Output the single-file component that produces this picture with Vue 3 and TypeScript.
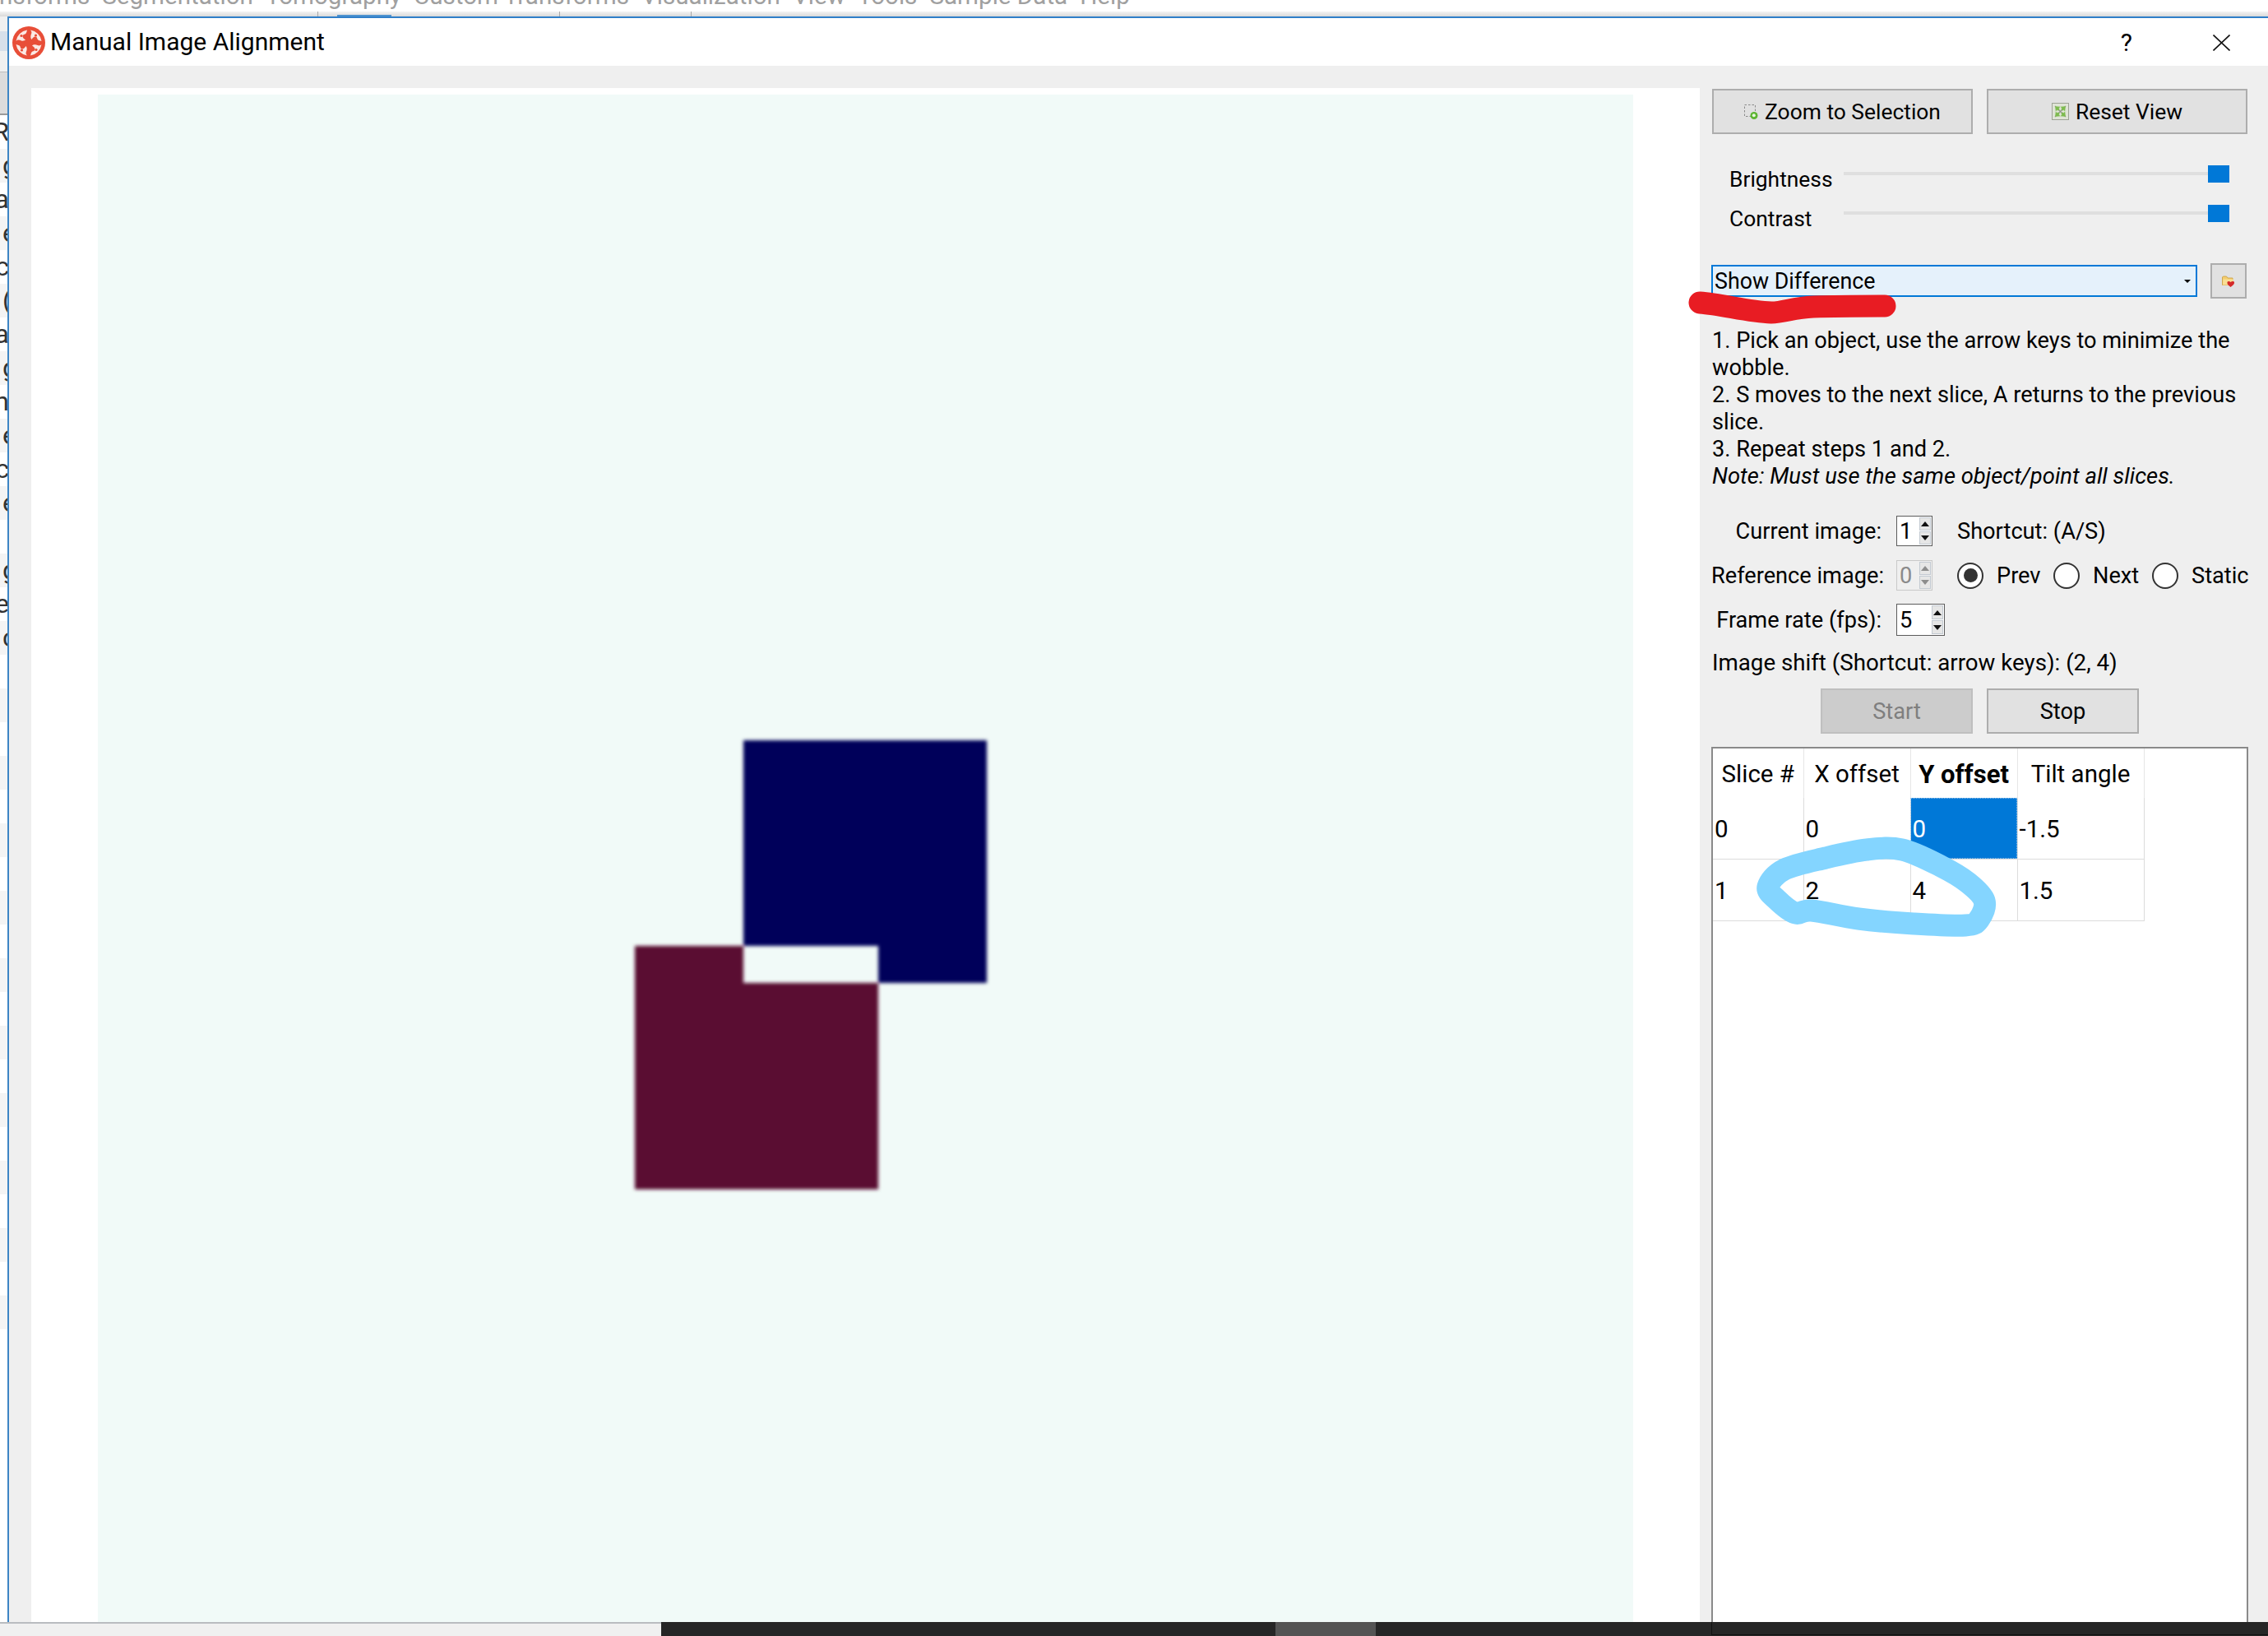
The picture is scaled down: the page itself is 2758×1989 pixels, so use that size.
<script setup lang="ts">
type Pt = [number, number]

function smoothClosed(pts: Pt[]): string {
  const n = pts.length
  let d = `M${pts[0][0]} ${pts[0][1]}`
  for (let i = 0; i < n; i++) {
    const p0 = pts[(i - 1 + n) % n]
    const p1 = pts[i]
    const p2 = pts[(i + 1) % n]
    const p3 = pts[(i + 2) % n]
    const c1x = p1[0] + (p2[0] - p0[0]) / 6
    const c1y = p1[1] + (p2[1] - p0[1]) / 6
    const c2x = p2[0] - (p3[0] - p1[0]) / 6
    const c2y = p2[1] - (p3[1] - p1[1]) / 6
    d += ` C${c1x.toFixed(1)} ${c1y.toFixed(1)} ${c2x.toFixed(1)} ${c2y.toFixed(1)} ${p2[0]} ${p2[1]}`
  }
  return d + 'Z'
}

const blueLoop = smoothClosed([
  [2150, 1078], [2170, 1057], [2220, 1043], [2270, 1033], [2313, 1033], [2360, 1053],
  [2393, 1073], [2413, 1095], [2407, 1117], [2390, 1125], [2327, 1123], [2260, 1117],
  [2203, 1107], [2183, 1110], [2160, 1093]
])

const menu = ['Transforms', 'Segmentation', 'Tomography', 'Custom Transforms', 'Visualization', 'View', 'Tools', 'Sample Data', 'Help']
const backRows = ['R', 'g', 'a', 'e', 'c', '(', 'a', 'g', 'n', 'e', 'c', 'e', '', 'g', 'e', 'c', '', '', '', '', '', '', '', '', '', '', '', '', '', '', '', '', '', '', '', '']
const petals = [0, 90, 180, 270]
const resetArrows = [45, 135, 225, 315]

const instructions = [
  '1. Pick an object, use the arrow keys to minimize the wobble.',
  '2. S moves to the next slice, A returns to the previous slice.',
  '3. Repeat steps 1 and 2.'
]

const sliders = ['Brightness', 'Contrast']
const radios = [
  { label: 'Prev', checked: true },
  { label: 'Next', checked: false },
  { label: 'Static', checked: false }
]

const headers = [
  { label: 'Slice #', bold: false },
  { label: 'X offset', bold: false },
  { label: 'Y offset', bold: true },
  { label: 'Tilt angle', bold: false }
]
const rows = [
  ['0', '0', '0', '-1.5'],
  ['1', '2', '4', '1.5']
]
</script>

<template>
  <div class="screen">
    <div class="back-window">
      <div class="menu">
        <span v-for="m in menu" :key="m">{{ m }}</span>
      </div>
      <div class="strip">
        <i class="sep s1"></i><i class="tab"></i><i class="sep s2"></i><i class="sep s3"></i>
      </div>
      <div class="toolbar"><i class="tool-icon"></i></div>
      <div class="toolbar lower"></div>
      <div class="list">
        <div v-for="(r, i) in backRows" :key="i" class="list-row" :class="{ alt: i % 2 === 1 }">{{ r }}</div>
      </div>
    </div>
    <div class="bottom">
      <div class="bottom-left"></div>
      <div class="taskbar">
        <i class="task-active"></i>
        <i class="task-ghost"></i>
      </div>
    </div>

    <div class="dialog">
      <div class="titlebar">
        <svg class="logo" viewBox="0 0 40 40" aria-hidden="true">
          <circle cx="20" cy="20" r="20" fill="#e84e38" />
          <g v-for="p in petals" :key="p" :transform="`rotate(${p} 20 20)`">
            <path d="M18 4.5 A16 16 0 0 0 4.5 18 C7 15.5 9 17 11 17.5 C13 18 15 17.5 16 16.5 C14 15 12.5 14 12.5 12 C12.5 10 14.500 10 15.500 9.500 C17 8.800 17.500 6.500 18 4.500Z" fill="#fbe9e4" />
            <circle cx="11" cy="11.500" r="1.600" fill="#e84e38" />
          </g>
        </svg>
        <span class="title">Manual Image Alignment</span>
        <span class="help">?</span>
        <svg class="close" viewBox="0 0 21 20" aria-hidden="true">
          <path d="M0.500 0.500 L20.500 19.500 M20.500 0.500 L0.500 19.500" stroke="#111" stroke-width="1.600" fill="none" />
        </svg>
      </div>

      <div class="body">
        <div class="canvas">
          <svg class="image" viewBox="119 115 1867 1857" aria-hidden="true">
            <defs>
              <filter id="soften" x="-5%" y="-5%" width="110%" height="110%">
                <feGaussianBlur stdDeviation="2.2" />
              </filter>
            </defs>
            <rect x="119" y="115" width="1867" height="1857" fill="#f1faf8" />
            <g filter="url(#soften)">
              <polygon points="904,900 1200,900 1200,1195 1068,1195 1068,1150 904,1150" fill="#00005a" />
              <polygon points="772,1150 904,1150 904,1195 1068,1195 1068,1446 772,1446" fill="#5a1033" />
            </g>
          </svg>
        </div>

        <div class="side">
          <div class="btn-row">
            <button class="btn wide">
              <svg class="ico-zoom" viewBox="0 0 17 18" aria-hidden="true">
                <rect x="0.500" y="0.500" width="13" height="14" fill="none" stroke="#8a8a8a" stroke-width="1" stroke-dasharray="2.500 2" />
                <circle cx="12" cy="13.500" r="4.500" fill="#5cb531" />
                <circle cx="11.800" cy="13.200" r="2" fill="#e8f6df" />
              </svg>
              <span>Zoom to Selection</span>
            </button>
            <button class="btn wide">
              <svg class="ico-reset" viewBox="0 0 21 21" aria-hidden="true">
                <rect x="0.500" y="0.500" width="20" height="20" fill="#dfe4d6" stroke="#9ea396" />
                <path d="M4 4 L17 17 M17 4 L4 17" stroke="#8f9488" stroke-width="1.200" />
                <g v-for="a in resetArrows" :key="a" :transform="`rotate(${a} 10.500 10.500)`">
                  <path d="M10.500 1.500 L14.500 6.500 L11.800 6.500 L11.800 8 L9.200 8 L9.200 6.500 L6.500 6.500Z" fill="#7dbb4e" />
                </g>
              </svg>
              <span>Reset View</span>
            </button>
          </div>

          <div class="sliders">
            <div v-for="s in sliders" :key="s" class="slider-row">
              <span class="slider-label">{{ s }}</span>
              <div class="slider"><i class="track"></i><i class="handle"></i></div>
            </div>
          </div>

          <div class="combo-row">
            <div class="combo">
              <span>Show Difference</span>
              <i class="combo-arrow"></i>
            </div>
            <button class="btn folder">
              <svg viewBox="0 0 16 14" class="ico-folder" aria-hidden="true">
                <path d="M0.500 2 L0.500 11.500 L13 11.500 L13 3 L7 3 L5.500 1 L1.500 1Z" fill="#f3cd6e" stroke="#c99a3a" stroke-width="0.800" />
                <path d="M1.500 4.500 L14 4.500 L12.500 11.500 L1 11.500Z" fill="#f9df93" />
                <path d="M10.500 14 C7 11.500 6 9.500 6.500 8 C7 6.800 9 6.600 10.500 8 C12 6.600 14.500 6.800 15 8 C15.500 9.500 14 11.500 10.500 14Z" fill="#d42a2a" />
              </svg>
            </button>
          </div>

          <div class="notes">
            <div v-for="line in instructions" :key="line">{{ line }}</div>
            <div class="note"><em>Note: Must use the same object/point all slices.</em></div>
          </div>

          <div class="form-row r1">
            <span class="form-label">Current image:</span>
            <div class="spin">
              <span class="spin-value">1</span>
              <div class="spin-btns"><i class="up"></i><i class="down"></i></div>
            </div>
            <span class="shortcut">Shortcut: (A/S)</span>
          </div>
          <div class="form-row r2">
            <span class="form-label">Reference image:</span>
            <div class="spin disabled">
              <span class="spin-value">0</span>
              <div class="spin-btns"><i class="up"></i><i class="down"></i></div>
            </div>
            <div class="radios">
              <div v-for="r in radios" :key="r.label" class="radio">
                <span class="radio-mark"><i v-if="r.checked"></i></span>
                <span>{{ r.label }}</span>
              </div>
            </div>
          </div>
          <div class="form-row r3">
            <span class="form-label">Frame rate (fps):</span>
            <div class="spin long">
              <span class="spin-value">5</span>
              <div class="spin-btns"><i class="up"></i><i class="down"></i></div>
            </div>
          </div>

          <div class="shift">Image shift (Shortcut: arrow keys): (2, 4)</div>

          <div class="run-row">
            <button class="btn run off">Start</button>
            <button class="btn run">Stop</button>
          </div>

          <div class="table-wrap">
            <table>
              <colgroup>
                <col class="c1" /><col class="c2" /><col class="c3" /><col class="c4" />
              </colgroup>
              <thead>
                <tr>
                  <th v-for="h in headers" :key="h.label" :class="{ bold: h.bold }">{{ h.label }}</th>
                </tr>
              </thead>
              <tbody>
                <tr v-for="(row, ri) in rows" :key="ri">
                  <td v-for="(cell, ci) in row" :key="ci" :class="{ selected: ri === 0 && ci === 2 }">{{ cell }}</td>
                </tr>
              </tbody>
            </table>
          </div>
        </div>
      </div>
    </div>

    <svg class="marks" viewBox="0 0 2758 1989" aria-hidden="true">
      <path d="M2067 368 C2095 370 2125 379 2154 380 C2170 380 2180 374 2205 373 C2235 372 2265 372 2292 372" fill="none" stroke="#e81c23" stroke-width="27" stroke-linecap="round" stroke-linejoin="round" />
      <path :d="blueLoop" fill="none" stroke="#84d5ff" stroke-width="27" stroke-linejoin="round" />
    </svg>
  </div>
</template>

<style>
html, body { margin: 0; padding: 0; background: #f0f0f0; }
</style>

<style scoped>
.screen {
  position: relative;
  width: 2758px;
  height: 1989px;
  overflow: hidden;
  display: flex;
  flex-direction: column;
  background: #f0f0f0;
  font-family: Roboto, "Open Sans", sans-serif;
  font-size: 27.2px;
  color: #000;
}

/* window behind the dialog */
.back-window { height: 1972px; display: flex; flex-direction: column; background: #fff; overflow: hidden; }
.menu {
  height: 14px;
  display: flex;
  gap: 15px;
  overflow: hidden;
  flex: none;
  margin-left: -43px;
  line-height: 14px;
  font-size: 29.6px;
  color: #a0a0a0;
  white-space: nowrap;
}
.menu span { margin-top: -12px; height: 26px; }
.strip {
  height: 6px;
  flex: none;
  display: flex;
  background: linear-gradient(#f4f4f4, #d9d9d9);
}
.sep { width: 1px; background: #a8a8a8; height: 100%; }
.s1 { margin-left: 386px; }
.s2 { margin-left: 204px; }
.s3 { margin-left: 159px; }
.tab { width: 66px; margin-left: 23px; height: 2px; margin-top: 4px; background: #4f93cf; }
.toolbar { height: 67px; flex: none; background: #f0f0f0; border-bottom: 1px solid #bdbdbd; position: relative; }
.tool-icon { display: block; width: 9px; height: 24px; margin-top: 18px; background: #d7e0ea; }
.toolbar.lower { height: 50px; background: #dcdcdc; border-bottom: 2px solid #9b9b9b; }
.list { flex: 1; overflow: hidden; }
.list-row {
  height: 41px;
  width: 11px;
  display: flex;
  justify-content: flex-end;
  padding-right: 0;
  line-height: 41px;
  color: #333;
  font-size: 32px;
  overflow: hidden;
}
.list-row.alt { width: 100%; background: #f4f4f4; justify-content: flex-start; padding-left: 3px; }

.bottom { height: 17px; flex: none; display: flex; }
.bottom-left { width: 804px; background: #f0f0f0; border-top: 2px solid #b9bcc0; box-sizing: border-box; }
.taskbar { flex: 1; background: #262626; position: relative; }
.task-active { position: absolute; left: 747px; top: 0; bottom: 0; width: 122px; background: #545454; }
.task-ghost { position: absolute; left: 1277px; right: 0; top: 0; bottom: 1px; border-left: 1px solid #111; border-bottom: 1px solid #111; }

/* dialog */
.dialog {
  position: absolute;
  left: 9px;
  top: 20px;
  width: 2749px;
  height: 1952px;
  box-sizing: border-box;
  border-top: 2px solid #2f7fc9;
  border-left: 2px solid #3d85c4;
  display: flex;
  flex-direction: column;
  background: #efefef;
}
.titlebar {
  height: 58px;
  flex: none;
  display: flex;
  align-items: center;
  background: #fff;
  padding-left: 4px;
}
.logo { width: 40px; height: 40px; flex: none; margin-top: 1px; }
.title { margin-left: 6px; font-size: 30px; line-height: 58px; }
.help { margin-left: auto; font-size: 30px; }
.close { width: 21px; height: 20px; flex: none; margin: 2px 46px 0 98px; }

.body { flex: 1; display: flex; min-height: 0; padding: 27px 0 0 27px; }
.canvas {
  width: 2029px;
  flex: none;
  background: #fff;
  box-sizing: border-box;
  padding: 8px 81px 0 81px;
  overflow: hidden;
}
.image { display: block; width: 1867px; height: 1857px; }

.side {
  width: 653px;
  flex: none;
  margin-left: 14px;
  padding-top: 1px;
  display: flex;
  flex-direction: column;
}

.btn {
  box-sizing: border-box;
  border: 2px solid #adadad;
  background: #e1e1e1;
  font: inherit;
  color: #000;
  padding: 0;
  display: flex;
  align-items: center;
  justify-content: center;
}
.btn-row { display: flex; gap: 17px; margin-left: 1px; }
.wide { width: 317px; height: 55px; gap: 8px; font-size: 26.4px; }
.ico-zoom { width: 17px; height: 18px; flex: none; }
.ico-reset { width: 21px; height: 21px; flex: none; }

.sliders { margin-top: 24px; }
.slider-row { height: 48px; display: flex; align-items: flex-start; }
.slider-label { width: 139px; margin-left: 22px; padding-top: 15px; line-height: 33px; flex: none; font-size: 26.4px; }
.slider { position: relative; width: 469px; height: 48px; }
.track {
  position: absolute;
  left: 0;
  right: 0;
  top: 22px;
  height: 4px;
  background: #dfdfdf;
}
.handle {
  position: absolute;
  right: 0;
  top: 14px;
  width: 26px;
  height: 21px;
  background: #0078d7;
}

.combo-row { display: flex; align-items: center; gap: 16px; margin-top: 37px; height: 43px; }
.combo {
  width: 591px;
  height: 39px;
  box-sizing: border-box;
  border: 2px solid #0078d7;
  background: #e5f1fb;
  display: flex;
  align-items: center;
  padding: 0 6px 0 2px;
  position: relative;
  font-size: 26.8px;
}
.combo-arrow {
  margin-left: auto;
  margin-right: 0;
  width: 0;
  height: 0;
  border-left: 4px solid transparent;
  border-right: 4px solid transparent;
  border-top: 4px solid #000;
}
.folder { width: 44px; height: 43px; }
.ico-folder { width: 16px; height: 14px; }

.notes { margin-top: 35px; margin-left: 1px; line-height: 33px; width: 650px; }
.note { font-size: 27.4px; }

.form-row { display: flex; align-items: center; white-space: nowrap; }
.r1 { margin-top: 31px; height: 37px; }
.r2 { margin-top: 17px; height: 37px; }
.r3 { margin-top: 16px; height: 39px; }
.form-label { width: 207px; text-align: right; flex: none; }
.spin {
  width: 44px;
  height: 100%;
  margin-left: 18px;
  flex: none;
  box-sizing: border-box;
  border: 1.500px solid #5c5c5c;
  background: #fff;
  display: flex;
  align-items: center;
  padding: 1px 1px 1px 3px;
}
.spin.long { width: 59px; }
.spin.disabled { border-color: #c9c9c9; background: #efefef; color: #8a8a8a; }
.spin-value { flex: 1; }
.spin-btns { width: 14px; height: 100%; display: flex; flex-direction: column; gap: 1px; flex: none; }
.spin-btns i { flex: 1; display: flex; align-items: center; justify-content: center; box-sizing: border-box; border: 1px solid #c3cad2; background: #e6e6e6; }
.spin-btns i::before {
  content: "";
  width: 0;
  height: 0;
  border-left: 5px solid transparent;
  border-right: 5px solid transparent;
}
.up::before { border-bottom: 6px solid #111; }
.down::before { border-top: 6px solid #111; }
.disabled .up::before { border-bottom-color: #8d8d8d; }
.disabled .down::before { border-top-color: #8d8d8d; }
.shortcut { margin-left: 30px; }

.radios { display: grid; grid-template-columns: 117px 120px auto; margin-left: 30px; }
.radio { display: flex; align-items: center; gap: 16px; }
.radio-mark {
  width: 32px;
  height: 32px;
  flex: none;
  box-sizing: border-box;
  border: 2px solid #333;
  border-radius: 50%;
  background: #fff;
  display: flex;
  align-items: center;
  justify-content: center;
}
.radio-mark i { width: 17px; height: 17px; border-radius: 50%; background: #333; }

.shift { margin-top: 16px; margin-left: 1px; line-height: 33px; font-size: 27.7px; }
.run-row { display: flex; gap: 17px; margin: 15px 0 0 133px; }
.run { width: 185px; height: 55px; }
.run.off { background: #cccccc; border-color: #bfbfbf; color: #7f7f7f; }

.table-wrap {
  margin-top: 16px;
  flex: 1;
  min-height: 0;
  box-sizing: border-box;
  border: 2px solid #8a8a8a;
  border-bottom: none;
  background: #fff;
  overflow: hidden;
  font-size: 29.5px;
}
table { border-collapse: collapse; table-layout: fixed; width: 524px; }
.c1 { width: 110px; }
.c2 { width: 130px; }
.c3 { width: 130px; }
.c4 { width: 154px; }
th {
  box-sizing: border-box;
  height: 60px;
  padding: 2px 0 0;
  font-weight: 400;
  text-align: center;
  border-right: 1px solid #e6e6e6;
}
th.bold { font-weight: 700; font-size: 31px; }
td {
  box-sizing: border-box;
  padding: 2px 0 0 2px;
  border-right: 1px solid #dcdcdc;
  border-bottom: 1px solid #dcdcdc;
  text-align: left;
}
tbody tr:first-child td { height: 74px; }
tbody tr:last-child td { height: 75px; }
td.selected { background: #0078d7; color: #fff; outline: 1px dotted #9cc6ea; outline-offset: -1px; }

.marks { position: absolute; inset: 0; width: 2758px; height: 1989px; pointer-events: none; }
</style>
